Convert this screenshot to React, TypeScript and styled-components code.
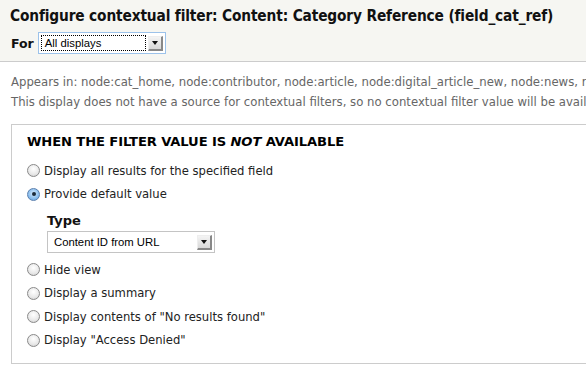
import React from "react";
import styled, { createGlobalStyle } from "styled-components";

const Global = createGlobalStyle`
  html, body { margin: 0; padding: 0; background: #fff; }
  body { font-family: "DejaVu Sans", Verdana, sans-serif; color: #333; overflow: hidden; }
`;

const Header = styled.div`
  background: #f6f6f2;
  border-bottom: 1px solid #cccccc;
  height: 62px;
  box-sizing: border-box;
  padding: 6px 10px 0;
`;

const Title = styled.h1`
  margin: 0;
  font-family: "DejaVu Sans Condensed", "DejaVu Sans", sans-serif;
  font-size: 15.3px;
  line-height: 20px;
  font-weight: bold;
  color: #111;
  white-space: nowrap;
  letter-spacing: -0.15px;
`;

const ForRow = styled.div`
  display: flex;
  align-items: center;
  gap: 4px;
  margin-top: 6px;
  padding-left: 1px;
`;

const ForLabel = styled.span`
  font-size: 12.5px;
  font-weight: bold;
  color: #111;
`;

const SelectBox = styled.div<{ $w: number; $focused?: boolean }>`
  width: ${(p) => p.$w}px;
  height: 22px;
  box-sizing: border-box;
  background: #fff;
  border: 1px solid ${(p) => (p.$focused ? "#9cc2ea" : "#c4c4c4")};
  display: flex;
  align-items: center;
  padding: 2px;
  gap: 2px;
  font-family: "Liberation Sans", Arial, sans-serif;
  font-size: 11.3px;
  color: #000;
`;

const SelectText = styled.div<{ $focused?: boolean }>`
  flex: 1;
  height: 100%;
  box-sizing: border-box;
  display: flex;
  align-items: center;
  padding-left: 3px;
  border: 1px ${(p) => (p.$focused ? "dotted #000" : "solid transparent")};
  white-space: nowrap;
  overflow: hidden;
`;

const Arrow = styled.div`
  width: 15px;
  height: 15px;
  box-sizing: border-box;
  background: linear-gradient(#f4f4f4, #d8d8d8);
  border-right: 2px solid #888;
  border-bottom: 2px solid #888;
  border-left: 1px solid #eee;
  border-top: 1px solid #eee;
  display: flex;
  align-items: center;
  justify-content: center;
  &::after {
    content: "";
    border-left: 3.5px solid transparent;
    border-right: 3.5px solid transparent;
    border-top: 4px solid #111;
  }
`;

const Content = styled.div`
  padding: 10px 11px 0;
`;

const Info = styled.p`
  margin: 0;
  font-size: 11.7px;
  line-height: 20px;
  color: #666;
  white-space: nowrap;
`;

const Fieldset = styled.div`
  margin-top: 12px;
  margin-right: -40px;
  border: 1px solid #cccccc;
  padding: 8px 15px 9px 15px;
  height: 240px;
  box-sizing: border-box;
`;

const Legend = styled.div`
  font-size: 13.1px;
  font-weight: bold;
  color: #000;
  text-transform: uppercase;
  line-height: 18px;
  margin-bottom: 8px;
  letter-spacing: -0.1px;
  em { font-style: italic; }
`;

const Options = styled.div`
  display: flex;
  flex-direction: column;
`;

const Option = styled.label`
  display: flex;
  align-items: center;
  gap: 4px;
  height: 23.5px;
  font-size: 11.6px;
  color: #222;
  white-space: nowrap;
`;

const Radio = styled.span<{ $checked?: boolean }>`
  width: 13px;
  height: 13px;
  box-sizing: border-box;
  border-radius: 50%;
  border: 1px solid ${(p) => (p.$checked ? "#5a7fae" : "#8a8a8a")};
  background: ${(p) =>
    p.$checked
      ? "radial-gradient(circle at 50% 40%, #d6ecff, #7eb6ea 70%, #5b9ad8)"
      : "radial-gradient(circle at 50% 35%, #ffffff, #e8e8e8 60%, #c9c9c9)"};
  display: flex;
  align-items: center;
  justify-content: center;
  flex: none;
  &::after {
    content: "";
    width: 4px;
    height: 4px;
    border-radius: 50%;
    background: ${(p) => (p.$checked ? "#1a2a3a" : "transparent")};
  }
`;

const SubForm = styled.div`
  padding: 7px 0 5px 20px;
`;

const SubLabel = styled.div`
  font-size: 13px;
  font-weight: bold;
  color: #111;
  line-height: 16px;
  margin-bottom: 2px;
`;

const Select = ({ value, width, focused }: { value: string; width: number; focused?: boolean }) => (
  <SelectBox $w={width} $focused={focused}>
    <SelectText $focused={focused}>{value}</SelectText>
    <Arrow />
  </SelectBox>
);

export default function App() {
  return (
    <>
      <Global />
      <Header>
        <Title>Configure contextual filter: Content: Category Reference (field_cat_ref)</Title>
        <ForRow>
          <ForLabel>For</ForLabel>
          <Select value="All displays" width={128} focused />
        </ForRow>
      </Header>
      <Content>
        <Info>
          Appears in: node:cat_home, node:contributor, node:article, node:digital_article_new, node:news, node:page
        </Info>
        <Info>
          This display does not have a source for contextual filters, so no contextual filter value will be available.
        </Info>
        <Fieldset>
          <Legend>
            When the filter value is <em>not</em> available
          </Legend>
          <Options>
            <Option><Radio />Display all results for the specified field</Option>
            <Option><Radio $checked />Provide default value</Option>
            <SubForm>
              <SubLabel>Type</SubLabel>
              <Select value="Content ID from URL" width={168} />
            </SubForm>
            <Option><Radio />Hide view</Option>
            <Option><Radio />Display a summary</Option>
            <Option><Radio />Display contents of "No results found"</Option>
            <Option><Radio />Display "Access Denied"</Option>
          </Options>
        </Fieldset>
      </Content>
    </>
  );
}
